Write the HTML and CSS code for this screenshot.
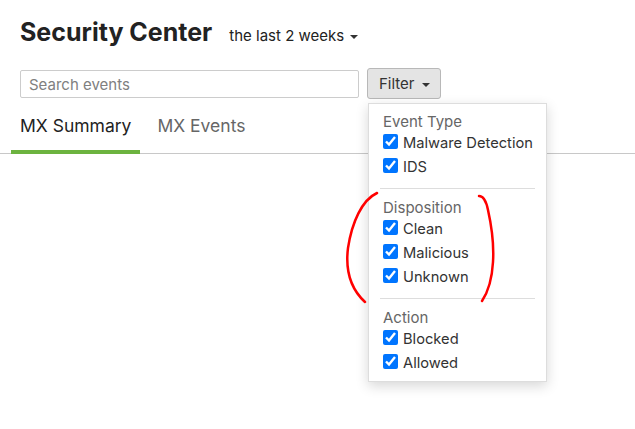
FILE: index.html
```html
<!DOCTYPE html>
<html>
<head>
<meta charset="utf-8">
<link rel="stylesheet" href="styles.css">
</head>
<body>
<div class="page">
  <header class="title-row">
    <h1 class="title">Security Center</h1>
    <span class="range">the last 2 weeks <span class="caret"></span></span>
  </header>
  <div class="toolbar">
    <input class="search" type="text" placeholder="Search events">
    <div class="filter-wrap">
      <button class="filter-btn">Filter <span class="caret"></span></button>
      <div class="dropdown">
        <div class="group">
          <div class="group-title">Event Type</div>
          <label class="item"><input type="checkbox" checked> Malware Detection</label>
          <label class="item"><input type="checkbox" checked> IDS</label>
        </div>
        <div class="sep"></div>
        <div class="group">
          <div class="group-title">Disposition</div>
          <label class="item"><input type="checkbox" checked> Clean</label>
          <label class="item"><input type="checkbox" checked> Malicious</label>
          <label class="item"><input type="checkbox" checked> Unknown</label>
        </div>
        <div class="sep"></div>
        <div class="group">
          <div class="group-title">Action</div>
          <label class="item"><input type="checkbox" checked> Blocked</label>
          <label class="item"><input type="checkbox" checked> Allowed</label>
        </div>
      </div>
    </div>
  </div>
  <nav class="tabs">
    <a class="tab active">MX Summary</a>
    <a class="tab">MX Events</a>
  </nav>
</div>
<svg class="annot" width="635" height="429" viewBox="0 0 635 429">
  <path d="M377,193 C362,200 352,222 348,248 C345,272 352,290 365,302" fill="none" stroke="#ff0000" stroke-width="2.5" stroke-linecap="round"/>
  <path d="M479,196 C483,196 486,200 488,210 C492,228 494,246 493,262 C492,280 488,292 482,301" fill="none" stroke="#ff0000" stroke-width="2.5" stroke-linecap="round"/>
</svg>
</body>
</html>
```
FILE: styles.css
```css
* { box-sizing: border-box; }
html, body { margin: 0; padding: 0; background: #fff; }
body {
  font-family: Inter, "Liberation Sans", sans-serif;
  color: #222;
  width: 635px;
  height: 429px;
  overflow: hidden;
  position: relative;
}
.page { padding-top: 16px; }
.title-row {
  display: flex;
  align-items: baseline;
  gap: 17px;
  padding-left: 20px;
  height: 32px;
}
.title {
  margin: 0;
  font-size: 25px;
  font-weight: 700;
  line-height: 32px;
  color: #222;
}
.range {
  font-size: 15px;
  color: #222;
  display: inline-flex;
  align-items: center;
  gap: 6px;
}
.caret {
  display: inline-block;
  width: 0; height: 0;
  border-left: 4px solid transparent;
  border-right: 4px solid transparent;
  border-top: 4px solid #333;
  margin-top: 2px;
}
.toolbar {
  display: flex;
  align-items: flex-start;
  gap: 8px;
  padding-left: 20px;
  margin-top: 20px;
  height: 40px;
}
.search {
  width: 339px;
  height: 28px;
  margin-top: 2px;
  border: 1px solid #ccc;
  border-radius: 2px;
  padding: 0 8px;
  font-family: inherit;
  font-size: 15px;
  color: #222;
  outline: none;
}
.search::placeholder { color: #808080; }
.filter-wrap { position: relative; }
.filter-btn {
  width: 74px;
  height: 31px;
  background: #e4e4e4;
  border: 1px solid #b8b8b8;
  border-radius: 3px;
  font-family: inherit;
  font-size: 15px;
  color: #333;
  display: flex;
  align-items: center;
  gap: 7px;
  padding: 0 0 0 11px;
}
.dropdown {
  position: absolute;
  top: 35px;
  left: 1px;
  width: 179px;
  background: #fff;
  border: 1px solid #ddd;
  box-shadow: 0 4px 12px rgba(0,0,0,0.16);
  padding: 8px 11px 6px 11px;
  z-index: 5;
}
.group { display: flex; flex-direction: column; padding-left: 3px; }
.group-title {
  font-size: 15px;
  color: #666;
  line-height: 19px;
}
.item {
  display: flex;
  align-items: center;
  gap: 5px;
  font-size: 14.7px;
  color: #333;
  line-height: 24px;
  height: 24px;
  white-space: nowrap;
}
.item input {
  width: 15px;
  height: 15px;
  margin: 0;
  margin-top: -3px;
}
.sep {
  height: 1px;
  background: #ddd;
  margin: 9px 0;
}
.tabs {
  display: flex;
  gap: 8px;
  padding-left: 11px;
  border-bottom: 1px solid #c8c8c8;
  height: 55px;
  margin-top: -9px;
}
.tab {
  font-size: 17.5px;
  color: #666;
  padding: 10px 9px 0 9px;
  line-height: 34px;
  height: 55px;
}
.tab.active {
  color: #222;
  border-bottom: 4px solid #6cb33f;
  margin-bottom: -1px;
}
.annot {
  position: absolute;
  left: 0; top: 0;
  pointer-events: none;
  z-index: 10;
}
```
